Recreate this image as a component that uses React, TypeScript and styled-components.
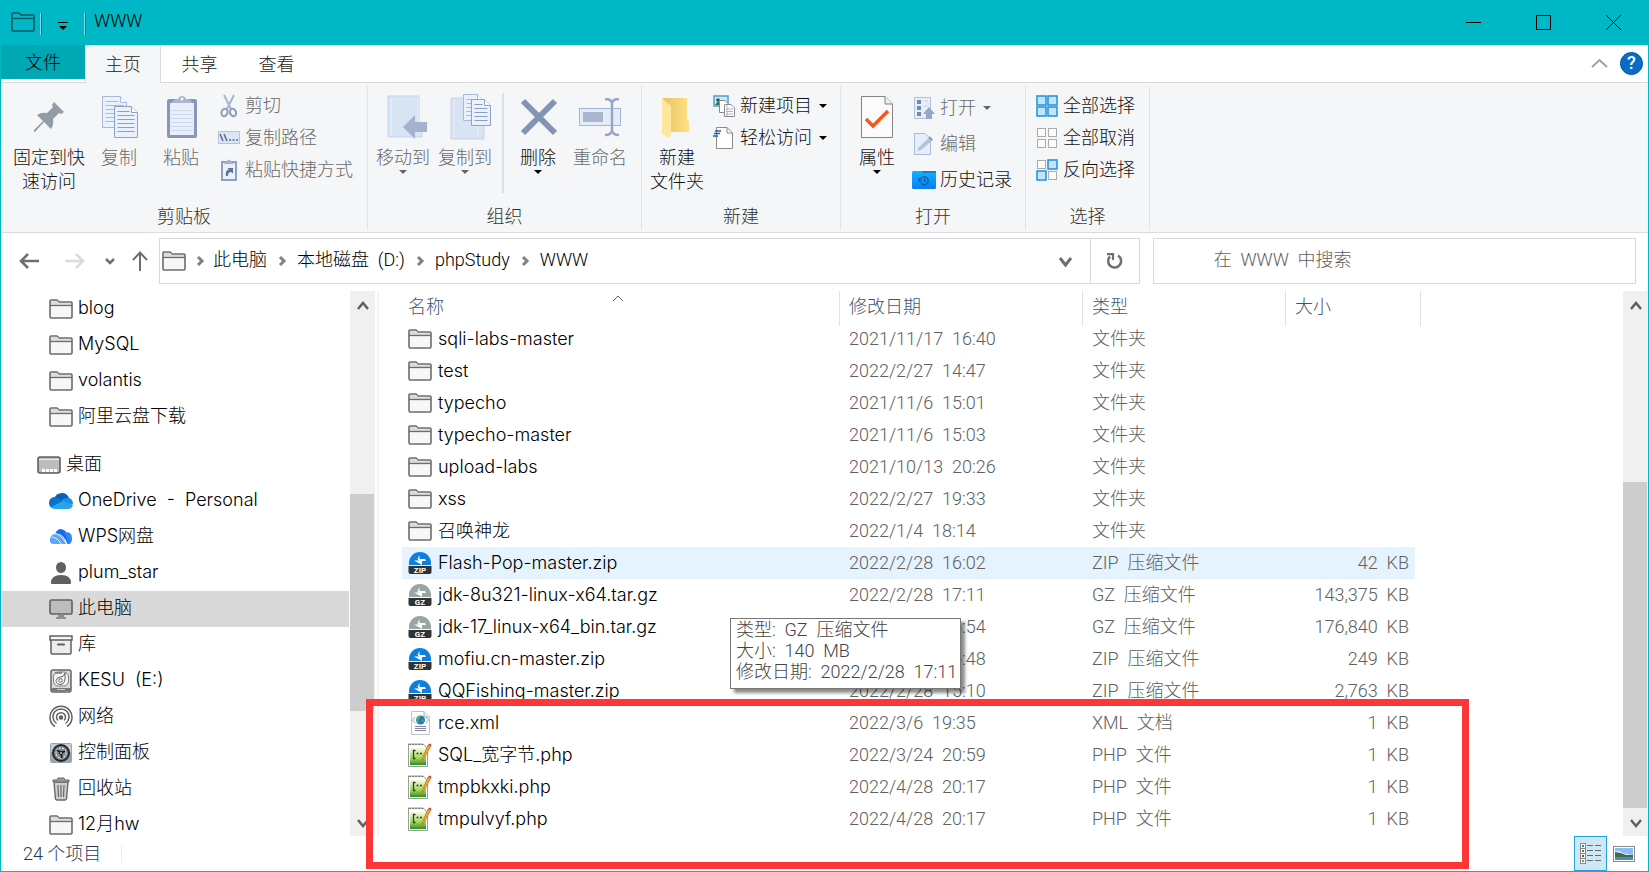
import React from "react";
import styled, { createGlobalStyle, css } from "styled-components";

const teal = "#00b7c6";
const line = "#dadbdc";

const GlobalStyle = createGlobalStyle`
  * { box-sizing: border-box; }
  body { margin: 0; background: #fff; }
  body, button, input, table {
    font-family: Roboto, "Noto Sans CJK SC", sans-serif;
    font-size: 18px;
    font-weight: 300;
    line-height: 24px;
    color: #000;
  }
  button { border: 0; padding: 0; background: none; white-space: nowrap; }
  a { color: inherit; text-decoration: none; }
  svg { display: block; flex: none; }
`;

const Window = styled.div`
  position: relative;
  height: 100vh;
  display: flex;
  flex-direction: column;
  border: 1px solid ${teal};
  overflow: hidden;
  background: #fff;
`;

/* ---------- title bar ---------- */

const TitleBar = styled.header`
  flex: none;
  height: 44px;
  display: flex;
  align-items: flex-start;
  background: ${teal};
  padding-left: 10px;
`;
const TitleIcon = styled.div`
  padding: 11px 5px 0 0;
`;
const TitleDivider = styled.div`
  width: 2px;
  height: 22px;
  margin-top: 12px;
  border-left: 1px solid #7fdbe3;
  border-right: 1px solid #0b7f8a;
`;
const QuickMenu = styled.button`
  width: 30px;
  height: 43px;
  display: flex;
  justify-content: center;
  padding-top: 21px;
  margin: 0 6px;
`;
const TitleText = styled.div`
  flex: 1;
  padding: 8px 0 0 8px;
`;
const WindowButton = styled.button`
  width: 70px;
  height: 43px;
  display: flex;
  align-items: center;
  justify-content: center;
`;

/* ---------- tabs ---------- */

const Tabs = styled.nav`
  flex: none;
  height: 38px;
  display: flex;
  align-items: flex-start;
  border-bottom: 1px solid ${line};
`;
const FileTab = styled.button`
  width: 84px;
  height: 34px;
  padding-top: 1px;
  background: #00a8b4;
`;
const Tab = styled.button<{ $active?: boolean }>`
  width: 77px;
  height: 38px;
  border: 1px solid transparent;
  border-bottom: 0;
  color: #222;
  ${(p) =>
    p.$active &&
    css`
      width: 76px;
      background: #f5f6f7;
      border-color: ${line};
    `}
`;
const TabTools = styled.div`
  margin-left: auto;
  height: 36px;
  display: flex;
  align-items: center;
  gap: 12px;
  padding-right: 5px;
`;
const IconButton = styled.button`
  display: flex;
`;
const HelpButton = styled.button`
  width: 23px;
  height: 23px;
  border-radius: 50%;
  background: #0a6cc9;
  border: 1px solid #04509b;
  color: #fff;
  font-weight: 500;
  line-height: 20px;
`;

/* ---------- ribbon ---------- */

const Ribbon = styled.div`
  flex: none;
  height: 150px;
  display: flex;
  background: #f5f6f7;
  border-bottom: 1px solid ${line};
  padding: 3px 0 2px;
`;
const Group = styled.section`
  display: flex;
  flex-direction: column;
  padding-top: 4px;
  border-right: 1px solid #e2e3e4;
`;
const GroupBody = styled.div<{ $left?: number; $right?: number }>`
  height: 115px;
  display: flex;
  padding: 0 ${(p) => p.$right ?? 13}px 0 ${(p) => p.$left ?? 5}px;
`;
const GroupName = styled.div`
  text-align: center;
  color: #333;
`;
const BigButton = styled.button<{ $width?: number; $disabled?: boolean }>`
  width: ${(p) => p.$width ?? 62}px;
  display: flex;
  flex-direction: column;
  align-items: center;
  color: ${(p) => (p.$disabled ? "#6a6a6a" : "#111")};
`;
const BigIcon = styled.span`
  height: 56px;
  display: flex;
  align-items: center;
`;
const SmallColumn = styled.div<{ $row?: number }>`
  display: grid;
  grid-auto-rows: ${(p) => p.$row ?? 32}px;
  align-content: start;
  padding-left: 5px;
`;
const SmallButton = styled.button<{ $disabled?: boolean }>`
  display: flex;
  align-items: center;
  gap: 5px;
  color: ${(p) => (p.$disabled ? "#6a6a6a" : "#111")};
`;
const SmallIcon = styled.span`
  width: 22px;
  display: flex;
  justify-content: center;
`;
const SmallCaret = styled.span`
  padding-left: 2px;
`;
const InnerDivider = styled.div`
  width: 2px;
  height: 100px;
  margin: 3px 3px 0 6px;
  background: #dcdee0;
`;

/* ---------- address row ---------- */

const AddressRow = styled.div`
  flex: none;
  height: 58px;
  display: grid;
  grid-template-columns: 158px minmax(0, 2fr) minmax(0, 1fr);
  padding: 5px 12px 7px 0;
`;
const NavButtons = styled.div`
  display: flex;
  align-items: center;
  padding-left: 18px;
`;
const NavSlot = styled.button<{ $width: number }>`
  width: ${(p) => p.$width}px;
  display: flex;
`;
const AddressField = styled.div`
  display: flex;
  align-items: center;
  margin-right: 4px;
  border: 1px solid #d9d9d9;
  padding-left: 2px;
`;
const Crumb = styled.button`
  white-space: pre;
  padding-bottom: 3px;
`;
const CrumbArrow = styled.span`
  width: 30px;
  display: flex;
  justify-content: center;
  &:first-of-type { width: 27px; }
`;
const DropSlot = styled.button`
  width: 48px;
  display: flex;
  justify-content: center;
  margin-left: auto;
`;
const RefreshSlot = styled.button`
  width: 49px;
  height: 100%;
  display: flex;
  align-items: center;
  justify-content: center;
  border-left: 1px solid #d9d9d9;
`;
const SearchBox = styled.input`
  width: calc(100% - 9px);
  margin-left: 9px;
  border: 1px solid #d9d9d9;
  border-radius: 0;
  padding: 0 10px 3px 60px;
  outline: 0;
  white-space: pre;
  &::placeholder { color: #606060; opacity: 1; }
`;

/* ---------- panes ---------- */

const Panes = styled.div`
  flex: 1;
  min-height: 0;
  display: flex;
`;
const Sidebar = styled.aside`
  width: 349px;
  flex: none;
  overflow: hidden;
`;
const SideItem = styled.a<{ $root?: boolean; $selected?: boolean }>`
  height: 36px;
  display: flex;
  align-items: center;
  gap: 5px;
  margin: ${(p) => (p.$root ? 12 : 0)}px 1px 0 0;
  padding-left: ${(p) => (p.$root ? 36 : 48)}px;
  background: ${(p) => (p.$selected ? "#d9d9d9" : "transparent")};
`;
const SideIcon = styled.span`
  width: 24px;
  display: flex;
  justify-content: center;
`;
const ItemLabel = styled.span`
  font-family: Inter, "Noto Sans CJK SC", sans-serif;
  white-space: pre;
`;
const SideLabel = styled(ItemLabel)`
  padding-bottom: 2px;
`;
const ScrollBar = styled.div`
  flex: none;
  width: 25px;
  display: flex;
  flex-direction: column;
  background: #f0f0f0;
`;
const ScrollArrow = styled.button`
  height: 28px;
  display: flex;
  align-items: center;
  justify-content: center;
  padding-top: 2px;
`;
const Track = styled.div`
  flex: 1;
  display: flex;
  flex-direction: column;
`;
const Space = styled.div<{ $grow: number }>`
  flex: ${(p) => p.$grow} 1 0;
`;
const Thumb = styled(Space)`
  margin-right: 1px;
  background: #cdcdcd;
`;
const Splitter = styled.div`
  width: 2px;
  margin-left: 2px;
  background: #f3f3f3;
`;
const FilePane = styled.main`
  position: relative;
  flex: 1;
  min-width: 0;
  overflow: hidden;
  padding-left: 23px;
`;
const FileTable = styled.table`
  width: 1019px;
  table-layout: fixed;
  border-collapse: collapse;
`;
const NameCol = styled.col`
  width: 438px;
`;
const DateCol = styled.col`
  width: 243px;
`;
const TypeCol = styled.col`
  width: 203px;
`;
const SizeCol = styled.col`
  width: 129px;
`;
const HeadCell = styled.th`
  height: 32px;
  padding: 0;
  font-weight: 300;
  text-align: left;
  vertical-align: top;
`;
const HeadLabel = styled.div<{ $name?: boolean }>`
  height: 35px;
  margin-bottom: -3px;
  padding: 4px 0 0 ${(p) => (p.$name ? 6 : 9)}px;
  display: flex;
  border-right: 1px solid #e2e2e2;
  color: #3f5570;
`;
const SortMark = styled.span`
  padding-left: 168px;
`;
const Row = styled.tr<{ $hover?: boolean }>`
  height: 32px;
  td { background: ${(p) => (p.$hover ? "#e5f3ff" : "transparent")}; }
`;
const Cell = styled.td<{ $right?: boolean }>`
  padding: 0 ${(p) => (p.$right ? 6 : 0)}px 0 9px;
  white-space: pre;
  color: #606060;
  text-align: ${(p) => (p.$right ? "right" : "left")};
`;
const NameCell = styled.td`
  padding: 0 0 0 6px;
`;
const FileName = styled.a`
  display: flex;
  align-items: center;
  gap: 6px;
`;
const Edge = styled.td`
  padding: 0;
  && { background: transparent; }
`;
const Tooltip = styled.div`
  position: absolute;
  left: 351px;
  top: 327px;
  height: 71px;
  padding: 0 3px 0 5px;
  background: #fff;
  border: 1px solid #767676;
  box-shadow: 4px 4px 3px rgba(0, 0, 0, 0.45);
  line-height: 21px;
  color: #444;
  white-space: pre;
`;
const Highlight = styled.div`
  position: absolute;
  left: 365px;
  right: 179px;
  bottom: 2px;
  height: 170px;
  border: 7px solid #fd3737;
  pointer-events: none;
`;

/* ---------- status bar ---------- */

const StatusBar = styled.footer`
  flex: none;
  height: 35px;
  display: flex;
  align-items: center;
  padding-left: 22px;
`;
const StatusText = styled.span`
  color: #1e395b;
  padding-right: 20px;
  border-right: 1px solid #ededed;
  line-height: 18px;
`;
const ViewButton = styled.button<{ $on?: boolean }>`
  height: 35px;
  width: ${(p) => (p.$on ? 33 : 41)}px;
  display: flex;
  align-items: center;
  justify-content: ${(p) => (p.$on ? "center" : "flex-start")};
  padding-left: ${(p) => (p.$on ? 0 : 6)}px;
  background: ${(p) => (p.$on ? "#cce8f6" : "transparent")};
  border: ${(p) => (p.$on ? "1px solid #26a0da" : "0")};
`;
const Views = styled.div`
  display: flex;
  margin-left: auto;
`;

/* ---------- drawings ---------- */

const Chevron = ({ dir, w = 10, h = 6, color = "#606060", weight = 2 }: { dir: "up" | "down" | "right"; w?: number; h?: number; color?: string; weight?: number }) => {
  const d =
    dir === "up" ? `M1 ${h - 1}L${w / 2} 1L${w - 1} ${h - 1}` : dir === "down" ? `M1 1L${w / 2} ${h - 1}L${w - 1} 1` : `M1 1L${w - 1} ${h / 2}L1 ${h - 1}`;
  return (
    <svg width={w} height={h} overflow="visible">
      <path d={d} fill="none" stroke={color} strokeWidth={weight} />
    </svg>
  );
};

const Caret = ({ color = "#000" }: { color?: string }) => (
  <svg width="8" height="4">
    <path d="M0 0H8L4 4Z" fill={color} />
  </svg>
);

const FolderIcon = ({ outline }: { outline?: boolean }) => (
  <svg width="24" height="20" viewBox="0 0 24 20" strokeWidth="1.6" stroke={outline ? "#07565e" : "#6c6c6c"} strokeLinejoin="round">
    <path d="M1 18V2Q1 1 2 1H8L10 3H22Q23 3 23 4V18Q23 19 22 19H2Q1 19 1 18Z" fill={outline ? "none" : "#f7f7f7"} />
    {!outline && <path d="M2 2H8L10 4H22V6H2Z" fill="#dcdcdc" stroke="none" />}
    <path d="M1 6.500H23" strokeWidth="1.300" />
  </svg>
);

const Page = ({ x, y, w, h, fill = "#eaf1fb", stroke = "#a9b9d6", lines = "#a9b9d6", step = 3 }: { x: number; y: number; w: number; h: number; fill?: string; stroke?: string; lines?: string; step?: number }) => (
  <g>
    <path d={`M${x} ${y}H${x + w - 6}L${x + w} ${y + 6}V${y + h}H${x}Z`} fill={fill} stroke={stroke} />
    <path d={`M${x + w - 6} ${y}V${y + 6}H${x + w}`} fill="#fff" stroke={stroke} />
    {Array.from({ length: Math.floor((h - 6) / step) }, (_, i) => (
      <path key={i} d={`M${x + 3} ${y + 5 + i * step}H${i < 1 ? x + w - 8 : x + w - 3}`} stroke={lines} />
    ))}
  </g>
);

const PinIcon = () => (
  <svg width="32" height="34" viewBox="0 0 32 34" fill="#929da3">
    <path d="M21 1L31 11L28 13L26 12L20 18Q21 24 18 28L11 21L2 31H1V29L10 20L4 14Q8 11 14 12L20 6L19 4Z" />
  </svg>
);
const CopyIcon = () => (
  <svg width="36" height="46" overflow="visible">
    <Page x={1.5} y={1.5} w={24} h={31} step={4} />
    <Page x={13.5} y={11.5} w={23} h={31} stroke="#8fa3c8" lines="#8da0c0" step={4} />
  </svg>
);
const PasteIcon = () => (
  <svg width="30" height="46" overflow="visible">
    <rect x="1" y="4" width="30" height="39" rx="2" fill="#8797b8" />
    <rect x="4" y="8" width="24" height="32" fill="#e8effa" />
    {[15, 19, 23, 27, 31, 35].map((y) => (
      <path key={y} d={`M5 ${y + 0.5}H27`} stroke="#cdd8ea" />
    ))}
    <path d="M6 8Q7 4 12 4Q13 1 16 1Q19 1 20 4Q25 4 26 8Z" fill="#a9b7cf" />
    <circle cx="16" cy="4" r="1.500" fill="#eef3fa" />
  </svg>
);
const CutIcon = () => (
  <svg width="18" height="24" fill="none">
    <path d="M4 1L11 15M14 1L7 15" stroke="#a8b5cf" strokeWidth="2" />
    <ellipse cx="4.500" cy="18.500" rx="3" ry="3.800" stroke="#8b9bbb" strokeWidth="2" transform="rotate(18 4.500 18.500)" />
    <ellipse cx="13" cy="18.500" rx="3" ry="3.800" stroke="#8b9bbb" strokeWidth="2" transform="rotate(-18 13 18.500)" />
  </svg>
);
const PathIcon = () => (
  <svg width="22" height="14">
    <rect x=".5" y=".5" width="21" height="12" fill="#dbe6f5" stroke="#b3c4df" />
    <path d="M2 3L5 10M6 3L9 10" stroke="#566a92" strokeWidth="1.500" />
    <path d="M11 9H13M14.500 9H16.500M18 9H20" stroke="#566a92" strokeWidth="1.500" />
  </svg>
);
const ShortcutIcon = () => (
  <svg width="18" height="24">
    <rect x="2" y="4" width="14" height="18" fill="#eaf1fb" stroke="#8fa0c2" strokeWidth="2" />
    <path d="M4 6L7 3Q9 0 11 3L14 6Z" fill="#a3b1cb" />
    <path d="M6 18Q5 12 9 11.500L7.500 10H13V15.500L11 14Q8 14 8 18Z" fill="#5f7399" />
  </svg>
);
const MoveIcon = () => (
  <svg width="48" height="46">
    <g transform="translate(4 0)">
      <path d="M5 1H36V30L39 27V42H5Z" fill="#d8e4f4" stroke="#c4d4ea" />
      <path d="M8 2V41M35 2V26" stroke="#e9f0fa" />
      <path d="M20 32L32 20V27H44V37H32V44Z" fill="#a3b3cf" />
    </g>
  </svg>
);
const CopyToIcon = () => (
  <svg width="52" height="48">
    <g transform="translate(11 0)">
      <path d="M1 4H28V30H34V45H1Z" fill="#d8e4f4" stroke="#c4d4ea" />
      <path d="M4 5V44M28 5V44" stroke="#eaf1fa" />
      <Page x={13.5} y={0.5} w={20} h={26} step={4} />
      <Page x={21.5} y={5.5} w={19} h={26} stroke="#8fa3c8" lines="#8da0c0" step={4} />
    </g>
  </svg>
);
const DeleteIcon = () => (
  <svg width="36" height="40" overflow="visible">
    <path d="M3 3L35 35M35 3L3 35" stroke="#8494b4" strokeWidth="6" />
  </svg>
);
const RenameIcon = () => (
  <svg width="42" height="40">
    <rect x=".5" y="10.500" width="41" height="17" fill="#e3edf9" stroke="#a3b6d6" />
    <rect x="4" y="14" width="20" height="10" fill="#a7b5cf" />
    <path d="M26 1Q32 1 33 5Q34 1 40 1M33 5V33M26 37Q32 37 33 33Q34 37 40 37" fill="none" stroke="#97a6c4" strokeWidth="2.500" />
  </svg>
);
const NewFolderIcon = () => (
  <svg width="32" height="42">
    <defs>
      <linearGradient id="nf" x1="0" x2="1">
        <stop offset="0" stopColor="#e8c260" />
        <stop offset="1" stopColor="#ffe085" />
      </linearGradient>
    </defs>
    <path d="M1 1H26V23L28 24V35H7Z" fill="url(#nf)" />
    <path d="M1 1L10 9V37L8 41L1 37Z" fill="#ffe69b" />
  </svg>
);
const NewItemIcon = () => (
  <svg width="22" height="22">
    <rect x="1" y="1" width="14" height="10" fill="#cdeaf5" stroke="#4f9fc9" strokeWidth="1.500" />
    <circle cx="5" cy="5" r="1.800" fill="#31524b" />
    <path d="M2 10L5 6L8 10Z" fill="#31765b" />
    <path d="M6.500 5.500H12L15.500 9V17.500H6.500Z" fill="#fff" stroke="#8a8a8a" />
    <path d="M11.500 9.500H18L21.500 13V21.500H11.500Z" fill="#fff" stroke="#8a8a8a" />
    <path d="M13 14H20M13 16.500H20M13 19H20" stroke="#8fbbe0" />
    <path d="M14 10V21" stroke="#f0a0a0" />
  </svg>
);
const EasyIcon = () => (
  <svg width="22" height="22">
    <path d="M3.500 .5H14L19.500 6V21.500H3.500Z" fill="#fff" stroke="#8a8a8a" />
    <path d="M14 .5V6H19.500" fill="none" stroke="#8a8a8a" />
    <path d="M2 4H8M1 6.500H7M0 9H5" stroke="#1565ad" strokeWidth="1.400" />
  </svg>
);
const PropertiesIcon = () => (
  <svg width="32" height="44">
    <path d="M.5 .5H24L31.500 8V41.500H.5Z" fill="#fbfbfb" stroke="#848484" />
    <path d="M24 .5V8H31.500" fill="#eee" stroke="#848484" />
    <path d="M5 23L12 30L27 15" fill="none" stroke="#f4581c" strokeWidth="3.500" />
  </svg>
);
const OpenIcon = () => (
  <svg width="22" height="24">
    <rect x="1.500" y="1.500" width="16" height="21" fill="#e6eefa" stroke="#b3c3de" />
    <path d="M4 4H8V8H4ZM4 10H8V14H4ZM4 16H8V20H4Z" fill="#7688ad" />
    <path d="M11 5H15M11 10H15" stroke="#c5d2e6" />
    <path d="M16 11L22 18H19V23H13V18H10Z" fill="#96a7c6" />
  </svg>
);
const EditIcon = () => (
  <svg width="22" height="24">
    <path d="M1.500 1.500H12L17.500 7V22.500H1.500Z" fill="#e6eefa" stroke="#a9bada" />
    <path d="M4 19L6 15L17 5L20 8L8 18Z" fill="#b4c2dc" />
    <path d="M16 5L19 8" stroke="#8797b8" strokeWidth="2" />
  </svg>
);
const HistoryIcon = () => (
  <svg width="24" height="18">
    <defs>
      <linearGradient id="hs" x1="0" y1="0" x2="0" y2="1">
        <stop offset="0" stopColor="#10b5fb" />
        <stop offset="1" stopColor="#0a7cf4" />
      </linearGradient>
    </defs>
    <rect width="24" height="18" rx="1.500" fill="url(#hs)" />
    <path d="M10 0H24V2H11Z" fill="#0b86d2" />
    <path d="M8.500 8.500A4 4 0 1 1 9 12M12.500 7V10H14.500" fill="none" stroke="#075aa8" strokeWidth="1.200" />
    <path d="M7 7V10H10" fill="none" stroke="#075aa8" strokeWidth="1.200" />
  </svg>
);
const SelectIcon = ({ on }: { on: boolean[] }) => (
  <svg width="22" height="22">
    {on.map((sel, i) => {
      const x = (i % 2) * 11;
      const y = Math.floor(i / 2) * 11;
      return <rect key={i} x={sel ? x + 1 : x + 1.5} y={sel ? y + 1 : y + 1.5} width={sel ? 9 : 8} height={sel ? 9 : 8} fill={sel ? "#c3e4fb" : "#fbfbfb"} stroke={sel ? "#2b95e0" : "#ababab"} strokeWidth={sel ? 1.6 : 1} />;
    })}
  </svg>
);
const DesktopIcon = () => (
  <svg width="24" height="18">
    <rect x="1" y="1" width="22" height="16" rx="2" fill="#bdbdbd" stroke="#5f5f5f" strokeWidth="1.600" />
    <path d="M2 3.500H22" stroke="#eee" />
    <path d="M5 13H8V16H5ZM9 13H12V16H9ZM13 13H16V16H13ZM17 13H20V16H17Z" fill="#fff" />
  </svg>
);
const OneDriveIcon = () => (
  <svg width="24" height="16">
    <path d="M5 6Q7 0 13 0Q18 0 20 5L12 11Z" fill="#0a5fb8" />
    <path d="M5 4Q9 4 13 8L8 15H5Q0 15 0 10Q0 5 5 4Z" fill="#0a73cd" />
    <path d="M12 8Q16 4 20 5Q24 6 24 11L20 13Z" fill="#1791e0" />
    <path d="M2 14L14 8L24 12Q23 16 19 16H6Q3 16 2 14Z" fill="#29a4ec" />
  </svg>
);
const WpsIcon = () => (
  <svg width="24" height="16">
    <path d="M6 5Q8 0 12 0Q18 1 19 8L21 15H18Q14 6 6 5Z" fill="#1769f0" />
    <path d="M15 4Q23 1 23 10Q23 15 19 15Q18 7 15 4Z" fill="#2d86fb" />
    <path d="M5 5Q13 6 17 15H5Q0 15 1 10Q2 6 5 5Z" fill="#58a6fd" />
    <path d="M6 4.500Q15 5 18 15M3 8Q9 9 12 15" fill="none" stroke="#fff" strokeWidth=".9" />
  </svg>
);
const UserIcon = () => (
  <svg width="22" height="22" fill="#606060">
    <ellipse cx="11" cy="5.500" rx="5" ry="5.500" />
    <path d="M1 21Q1 13 11 13Q21 13 21 21Q21 22 20 22H2Q1 22 1 21Z" />
  </svg>
);
const PcIcon = () => (
  <svg width="24" height="20">
    <rect x="1" y="1" width="22" height="14" rx="1.500" fill="#bdbdbd" stroke="#606060" strokeWidth="1.600" />
    <path d="M9 17H15M7 19H17" stroke="#777" strokeWidth="1.500" />
  </svg>
);
const LibraryIcon = () => (
  <svg width="24" height="20" stroke="#606060" strokeWidth="1.500">
    <rect x="2" y="4" width="20" height="15" rx="1" fill="#ededed" />
    <rect x="1" y="1" width="22" height="4" fill="#f5f5f5" />
    <path d="M9 9.500H15" strokeWidth="2.200" strokeLinecap="round" />
  </svg>
);
const DiskIcon = () => (
  <svg width="22" height="24" fill="none" stroke="#666">
    <rect x="1" y="1" width="20" height="22" rx="2" fill="#d8d8d8" strokeWidth="1.500" />
    <rect x="3.500" y="3" width="15" height="14" rx="5" fill="#f5f5f5" strokeWidth=".8" />
    <path d="M15 4Q16 15 11 15.500Q6 15.500 6 11.500Q7 8 11 8Q14 8 15 4Z" />
    <circle cx="10.500" cy="11.500" r="1.800" />
    <path d="M5 4H12" strokeWidth="1.300" />
    <path d="M1 19H21V22H1Z" fill="#777" stroke="none" />
    <path d="M7 20.500H15" stroke="#ccc" />
  </svg>
);
const NetworkIcon = () => (
  <svg width="24" height="24" fill="none" stroke="#606060" strokeWidth="1.500">
    <path d="M6 21.500A11 11 0 1 1 18 21.500M7.500 18.500A8 8 0 1 1 16.500 18.500M9 15.500A4.500 4.500 0 1 1 15 15.500" />
    <circle cx="12" cy="12.500" r="1.500" fill="#606060" />
  </svg>
);
const ControlIcon = () => (
  <svg width="22" height="20">
    <rect width="22" height="20" rx="2" fill="#9aa6ae" />
    <rect x="1" y="1" width="20" height="8" fill="#c4ced4" />
    <circle cx="11" cy="10" r="8" fill="#7e868a" stroke="#24282a" strokeWidth="2" />
    <circle cx="11" cy="10" r="5" fill="none" stroke="#e3e3e3" strokeWidth="1.200" strokeDasharray="2 1" />
    <path d="M11 10L15 8M11 10L12 15M11 10L7 7" stroke="#111" strokeWidth="1.500" />
    <circle cx="11" cy="10" r="1.500" fill="#ddd" stroke="#111" />
  </svg>
);
const BinIcon = () => (
  <svg width="18" height="24" stroke="#6a6a6a">
    <path d="M2 5H16L14.500 22Q14 23 13 23H5Q4 23 3.500 22Z" fill="#cfcfcf" strokeWidth="1.400" />
    <path d="M6 1H12L13 3H17V5H1V3H5Z" fill="#999" />
    <path d="M6 8L6.500 20M9 8V20M12 8L11.500 20" fill="none" strokeWidth="1.200" />
  </svg>
);
const ArchiveIcon = ({ kind }: { kind: "ZIP" | "GZ" }) => (
  <svg width="24" height="24">
    <path d="M1 12A11 11 0 0 1 23 12V14H1Z" fill={kind === "ZIP" ? "#0f7fdd" : "#97a5a5"} />
    <path d="M11.500 4V8H17L18 10H14V14L6 9.500H11L9.500 8Z" fill="#fff" />
    <path d="M.5 15H23.500V21Q23.500 23 21.500 23H2.500Q.5 23 .5 21Z" fill="#303336" />
    <text x="12" y="22" textAnchor="middle" fontFamily="Roboto, sans-serif" fontWeight="700" fontSize="8" fill="#fff">
      {kind}
    </text>
  </svg>
);
const XmlIcon = () => (
  <svg width="24" height="24">
    <path d="M3.500 .5H16L21.500 6V23.500H3.500Z" fill="#fdfdfd" stroke="#c4c4c4" />
    <path d="M16 .5V6H21.500" fill="#eee" stroke="#b5b5b5" />
    <circle cx="12.500" cy="9" r="4.500" fill="#2375c9" />
    <path d="M8.500 8Q10 4 13 5Q12 8 10 9L11 12Q8 11 8.500 8ZM14 8L16 9L14 12Z" fill="#56b85a" />
    <path d="M7 6L4.500 9L7 12M18 6L20.500 9L18 12" fill="none" stroke="#9ab" />
    <path d="M7 15.500H18M7 17.500H18M7 19.500H18" stroke="#8187a5" />
  </svg>
);
const PhpIcon = () => (
  <svg width="24" height="24">
    <defs>
      <linearGradient id="ph" x1="0" y1="0" x2="0" y2="1">
        <stop offset="0" stopColor="#f4fbe4" />
        <stop offset=".6" stopColor="#9edb4c" />
        <stop offset="1" stopColor="#219126" />
      </linearGradient>
    </defs>
    <path d="M.5 1H15L19.500 6V23.500H.5Z" fill="#fff" stroke="#9a9a9a" />
    <path d="M1 1.500H15" stroke="#777" strokeDasharray="2 1" />
    <rect x="2" y="5" width="16" height="17" fill="url(#ph)" />
    <path d="M7.500 7.500H5.500V15.500H7.500M8.500 10.500H10.500M12 10.500H14" fill="none" stroke="#334" strokeWidth="1.300" />
    <path d="M20 2L13 18L12 20L14 19L23 3Z" fill="#f0a32a" stroke="#b06c16" strokeWidth=".6" />
    <path d="M20 2L21.500 .5L23.500 1.500L23 3.500Z" fill="#c04a55" />
  </svg>
);
const BackIcon = ({ color }: { color: string }) => (
  <svg width="20" height="16" fill="none" stroke={color} strokeWidth="2.600">
    <path d="M9 1L2 8L9 15M2 8H20" />
  </svg>
);

/* ---------- data ---------- */

const sideItems: { label: string; icon: React.ReactNode; root?: boolean; selected?: boolean }[] = [
  { label: "blog", icon: <FolderIcon /> },
  { label: "MySQL", icon: <FolderIcon /> },
  { label: "volantis", icon: <FolderIcon /> },
  { label: "阿里云盘下载", icon: <FolderIcon /> },
  { label: "桌面", icon: <DesktopIcon />, root: true },
  { label: "OneDrive  -  Personal", icon: <OneDriveIcon /> },
  { label: "WPS网盘", icon: <WpsIcon /> },
  { label: "plum_star", icon: <UserIcon /> },
  { label: "此电脑", icon: <PcIcon />, selected: true },
  { label: "库", icon: <LibraryIcon /> },
  { label: "KESU  (E:)", icon: <DiskIcon /> },
  { label: "网络", icon: <NetworkIcon /> },
  { label: "控制面板", icon: <ControlIcon /> },
  { label: "回收站", icon: <BinIcon /> },
  { label: "12月hw", icon: <FolderIcon /> },
];

const zip = <ArchiveIcon kind="ZIP" />;
const gz = <ArchiveIcon kind="GZ" />;
const files: [React.ReactNode, string, string, string, string][] = [
  [<FolderIcon />, "sqli-labs-master", "2021/11/17  16:40", "文件夹", ""],
  [<FolderIcon />, "test", "2022/2/27  14:47", "文件夹", ""],
  [<FolderIcon />, "typecho", "2021/11/6  15:01", "文件夹", ""],
  [<FolderIcon />, "typecho-master", "2021/11/6  15:03", "文件夹", ""],
  [<FolderIcon />, "upload-labs", "2021/10/13  20:26", "文件夹", ""],
  [<FolderIcon />, "xss", "2022/2/27  19:33", "文件夹", ""],
  [<FolderIcon />, "召唤神龙", "2022/1/4  18:14", "文件夹", ""],
  [zip, "Flash-Pop-master.zip", "2022/2/28  16:02", "ZIP  压缩文件", "42  KB"],
  [gz, "jdk-8u321-linux-x64.tar.gz", "2022/2/28  17:11", "GZ  压缩文件", "143,375  KB"],
  [gz, "jdk-17_linux-x64_bin.tar.gz", "2022/2/28  16:54", "GZ  压缩文件", "176,840  KB"],
  [zip, "mofiu.cn-master.zip", "2022/2/28  15:48", "ZIP  压缩文件", "249  KB"],
  [zip, "QQFishing-master.zip", "2022/2/28  15:10", "ZIP  压缩文件", "2,763  KB"],
  [<XmlIcon />, "rce.xml", "2022/3/6  19:35", "XML  文档", "1  KB"],
  [<PhpIcon />, "SQL_宽字节.php", "2022/3/24  20:59", "PHP  文件", "1  KB"],
  [<PhpIcon />, "tmpbkxki.php", "2022/4/28  20:17", "PHP  文件", "1  KB"],
  [<PhpIcon />, "tmpulvyf.php", "2022/4/28  20:17", "PHP  文件", "1  KB"],
];

/* ---------- composed parts ---------- */

const Big = ({ icon, lines, width, disabled, caret }: { icon: React.ReactNode; lines: string[]; width?: number; disabled?: boolean; caret?: boolean }) => (
  <BigButton $width={width} $disabled={disabled}>
    <BigIcon>{icon}</BigIcon>
    {lines.map((l) => (
      <span key={l}>{l}</span>
    ))}
    {caret && <Caret color={disabled ? "#666" : "#000"} />}
  </BigButton>
);

const Small = ({ icon, label, disabled, caret }: { icon: React.ReactNode; label: string; disabled?: boolean; caret?: boolean }) => (
  <SmallButton $disabled={disabled}>
    <SmallIcon>{icon}</SmallIcon>
    <span>{label}</span>
    {caret && (
      <SmallCaret>
        <Caret color={disabled ? "#666" : "#000"} />
      </SmallCaret>
    )}
  </SmallButton>
);

const Scroll = ({ parts }: { parts: [number, number, number] }) => (
  <ScrollBar>
    <ScrollArrow aria-label="向上滚动">
      <Chevron dir="up" w={12} h={8} weight={2.5} />
    </ScrollArrow>
    <Track>
      <Space $grow={parts[0]} />
      <Thumb $grow={parts[1]} />
      <Space $grow={parts[2]} />
    </Track>
    <ScrollArrow aria-label="向下滚动">
      <Chevron dir="down" w={12} h={8} weight={2.5} />
    </ScrollArrow>
  </ScrollBar>
);

export default function App() {
  return (
    <>
      <GlobalStyle />
      <Window>
        <TitleBar>
          <TitleIcon>
            <FolderIcon outline />
          </TitleIcon>
          <TitleDivider />
          <QuickMenu aria-label="自定义快速访问工具栏">
            <svg width="10" height="9">
              <path d="M0 .5H10" stroke="#000" />
              <path d="M1 4H9L5 8Z" />
            </svg>
          </QuickMenu>
          <TitleDivider />
          <TitleText>WWW</TitleText>
          <WindowButton aria-label="最小化">
            <svg width="15" height="15">
              <path d="M0 7.500H15" stroke="#000" />
            </svg>
          </WindowButton>
          <WindowButton aria-label="最大化">
            <svg width="15" height="15">
              <rect x=".5" y=".5" width="14" height="14" fill="none" stroke="#000" />
            </svg>
          </WindowButton>
          <WindowButton aria-label="关闭">
            <svg width="15" height="15">
              <path d="M0 0L15 15M15 0L0 15" stroke="#000" />
            </svg>
          </WindowButton>
        </TitleBar>

        <Tabs>
          <FileTab>文件</FileTab>
          <Tab $active>主页</Tab>
          <Tab>共享</Tab>
          <Tab>查看</Tab>
          <TabTools>
            <IconButton aria-label="最小化功能区">
              <Chevron dir="up" w={17} h={9} color="#a0a0a0" />
            </IconButton>
            <HelpButton>?</HelpButton>
          </TabTools>
        </Tabs>

        <Ribbon>
          <Group>
            <GroupBody $left={8} $right={14}>
              <Big width={80} icon={<PinIcon />} lines={["固定到快", "速访问"]} />
              <Big width={60} icon={<CopyIcon />} lines={["复制"]} disabled />
              <Big width={64} icon={<PasteIcon />} lines={["粘贴"]} disabled />
              <SmallColumn>
                <Small icon={<CutIcon />} label="剪切" disabled />
                <Small icon={<PathIcon />} label="复制路径" disabled />
                <Small icon={<ShortcutIcon />} label="粘贴快捷方式" disabled />
              </SmallColumn>
            </GroupBody>
            <GroupName>剪贴板</GroupName>
          </Group>
          <Group>
            <GroupBody $left={4} $right={10}>
              <Big icon={<MoveIcon />} lines={["移动到"]} disabled caret />
              <Big icon={<CopyToIcon />} lines={["复制到"]} disabled caret />
              <InnerDivider />
              <Big icon={<DeleteIcon />} lines={["删除"]} caret />
              <Big icon={<RenameIcon />} lines={["重命名"]} disabled />
            </GroupBody>
            <GroupName>组织</GroupName>
          </Group>
          <Group>
            <GroupBody $left={4}>
              <Big icon={<NewFolderIcon />} lines={["新建", "文件夹"]} />
              <SmallColumn>
                <Small icon={<NewItemIcon />} label="新建项目" caret />
                <Small icon={<EasyIcon />} label="轻松访问" caret />
              </SmallColumn>
            </GroupBody>
            <GroupName>新建</GroupName>
          </Group>
          <Group>
            <GroupBody>
              <Big icon={<PropertiesIcon />} lines={["属性"]} caret />
              <SmallColumn $row={36}>
                <Small icon={<OpenIcon />} label="打开" disabled caret />
                <Small icon={<EditIcon />} label="编辑" disabled />
                <Small icon={<HistoryIcon />} label="历史记录" />
              </SmallColumn>
            </GroupBody>
            <GroupName>打开</GroupName>
          </Group>
          <Group>
            <GroupBody $right={14}>
              <SmallColumn>
                <Small icon={<SelectIcon on={[true, true, true, true]} />} label="全部选择" />
                <Small icon={<SelectIcon on={[false, false, false, false]} />} label="全部取消" />
                <Small icon={<SelectIcon on={[false, true, true, false]} />} label="反向选择" />
              </SmallColumn>
            </GroupBody>
            <GroupName>选择</GroupName>
          </Group>
        </Ribbon>

        <AddressRow>
          <NavButtons>
            <NavSlot $width={46} aria-label="后退">
              <BackIcon color="#707070" />
            </NavSlot>
            <NavSlot $width={40} aria-label="前进">
              <svg width="20" height="16" fill="none" stroke="#dcdcdc" strokeWidth="2.600">
                <path d="M11 1L18 8L11 15M18 8H0" />
              </svg>
            </NavSlot>
            <NavSlot $width={27} aria-label="最近浏览的位置">
              <Chevron dir="down" color="#6e6e6e" weight={2.5} />
            </NavSlot>
            <NavSlot $width={16} aria-label="上移">
              <svg width="16" height="20" fill="none" stroke="#6e6e6e" strokeWidth="2">
                <path d="M1 9L8 1.500L15 9M8 1.500V20" />
              </svg>
            </NavSlot>
          </NavButtons>
          <AddressField>
            <FolderIcon />
            {["此电脑", "本地磁盘  (D:)", "phpStudy", "WWW"].map((c) => (
              <React.Fragment key={c}>
                <CrumbArrow>
                  <Chevron dir="right" w={6} h={10} color="#808080" weight={3} />
                </CrumbArrow>
                <Crumb>{c}</Crumb>
              </React.Fragment>
            ))}
            <DropSlot aria-label="以前的位置">
              <Chevron dir="down" w={13} h={9} color="#707070" weight={3} />
            </DropSlot>
            <RefreshSlot aria-label="刷新">
              <svg width="18" height="18" fill="none" stroke="#707070" strokeWidth="2.500">
                <path d="M12 3.500A6.500 6.500 0 1 1 4 4.500" />
                <path d="M1 2.200H7V8" strokeWidth="2.200" />
              </svg>
            </RefreshSlot>
          </AddressField>
          <SearchBox aria-label="搜索" placeholder={"在  WWW  中搜索"} />
        </AddressRow>

        <Panes>
          <Sidebar>
            {sideItems.map((s) => (
              <SideItem key={s.label} href="#" $root={s.root} $selected={s.selected}>
                <SideIcon>{s.icon}</SideIcon>
                <SideLabel>{s.label}</SideLabel>
              </SideItem>
            ))}
          </Sidebar>
          <Scroll parts={[175, 217, 97]} />
          <Splitter />
          <FilePane>
            <FileTable>
              <colgroup>
                <NameCol />
                <DateCol />
                <TypeCol />
                <SizeCol />
                <col />
              </colgroup>
              <thead>
                <tr>
                  <HeadCell>
                    <HeadLabel $name>
                      名称
                      <SortMark>
                        <Chevron dir="up" w={12} h={7} weight={1} />
                      </SortMark>
                    </HeadLabel>
                  </HeadCell>
                  <HeadCell>
                    <HeadLabel>修改日期</HeadLabel>
                  </HeadCell>
                  <HeadCell>
                    <HeadLabel>类型</HeadLabel>
                  </HeadCell>
                  <HeadCell colSpan={2}>
                    <HeadLabel>大小</HeadLabel>
                  </HeadCell>
                </tr>
              </thead>
              <tbody>
                {files.map(([icon, name, date, type, size]) => (
                  <Row key={name} $hover={name.startsWith("Flash")}>
                    <NameCell>
                      <FileName href="#">
                        <SideIcon>{icon}</SideIcon>
                        <ItemLabel>{name}</ItemLabel>
                      </FileName>
                    </NameCell>
                    <Cell>{date}</Cell>
                    <Cell>{type}</Cell>
                    <Cell $right>{size}</Cell>
                    <Edge />
                  </Row>
                ))}
              </tbody>
            </FileTable>
            <Tooltip role="tooltip">
              <div>类型:  GZ  压缩文件</div>
              <div>大小:  140  MB</div>
              <div>修改日期:  2022/2/28  17:11</div>
            </Tooltip>
          </FilePane>
          <Scroll parts={[164, 327, 0]} />
        </Panes>

        <StatusBar>
          <StatusText>24 个项目</StatusText>
          <Views>
            <ViewButton $on aria-label="详细信息">
              <svg width="21" height="22">
                {[0, 1, 2, 3].map((i) => (
                  <g key={i}>
                    <rect x=".5" y={0.5 + i * 5} width="5" height="5" fill="#fff" stroke="#8a8a8a" />
                    <rect x="2" y={2 + i * 5} width="2" height="2" fill={["#3a78c9", "#777a20", "#c02a20", "#6aa05a"][i]} />
                    <path d={`M7 ${2.5 + i * 5}H13M15 ${2.5 + i * 5}H21`} stroke="#6a6a6a" />
                  </g>
                ))}
              </svg>
            </ViewButton>
            <ViewButton aria-label="大缩略图">
              <svg width="22" height="16">
                <rect x=".5" y=".5" width="21" height="15" fill="#fff" stroke="#8a8a8a" />
                <rect x="2" y="2" width="18" height="12" fill="#8cbcf0" />
                <path d="M2 5Q6 4 10 7L20 9V14H2Z" fill="#d8e8f2" />
                <path d="M2 6Q9 7 13 9H20V11H2Z" fill="#3d6b52" />
                <path d="M2 11H20V14H2Z" fill="#4a8fb0" />
              </svg>
            </ViewButton>
          </Views>
        </StatusBar>
        <Highlight />
      </Window>
    </>
  );
}
